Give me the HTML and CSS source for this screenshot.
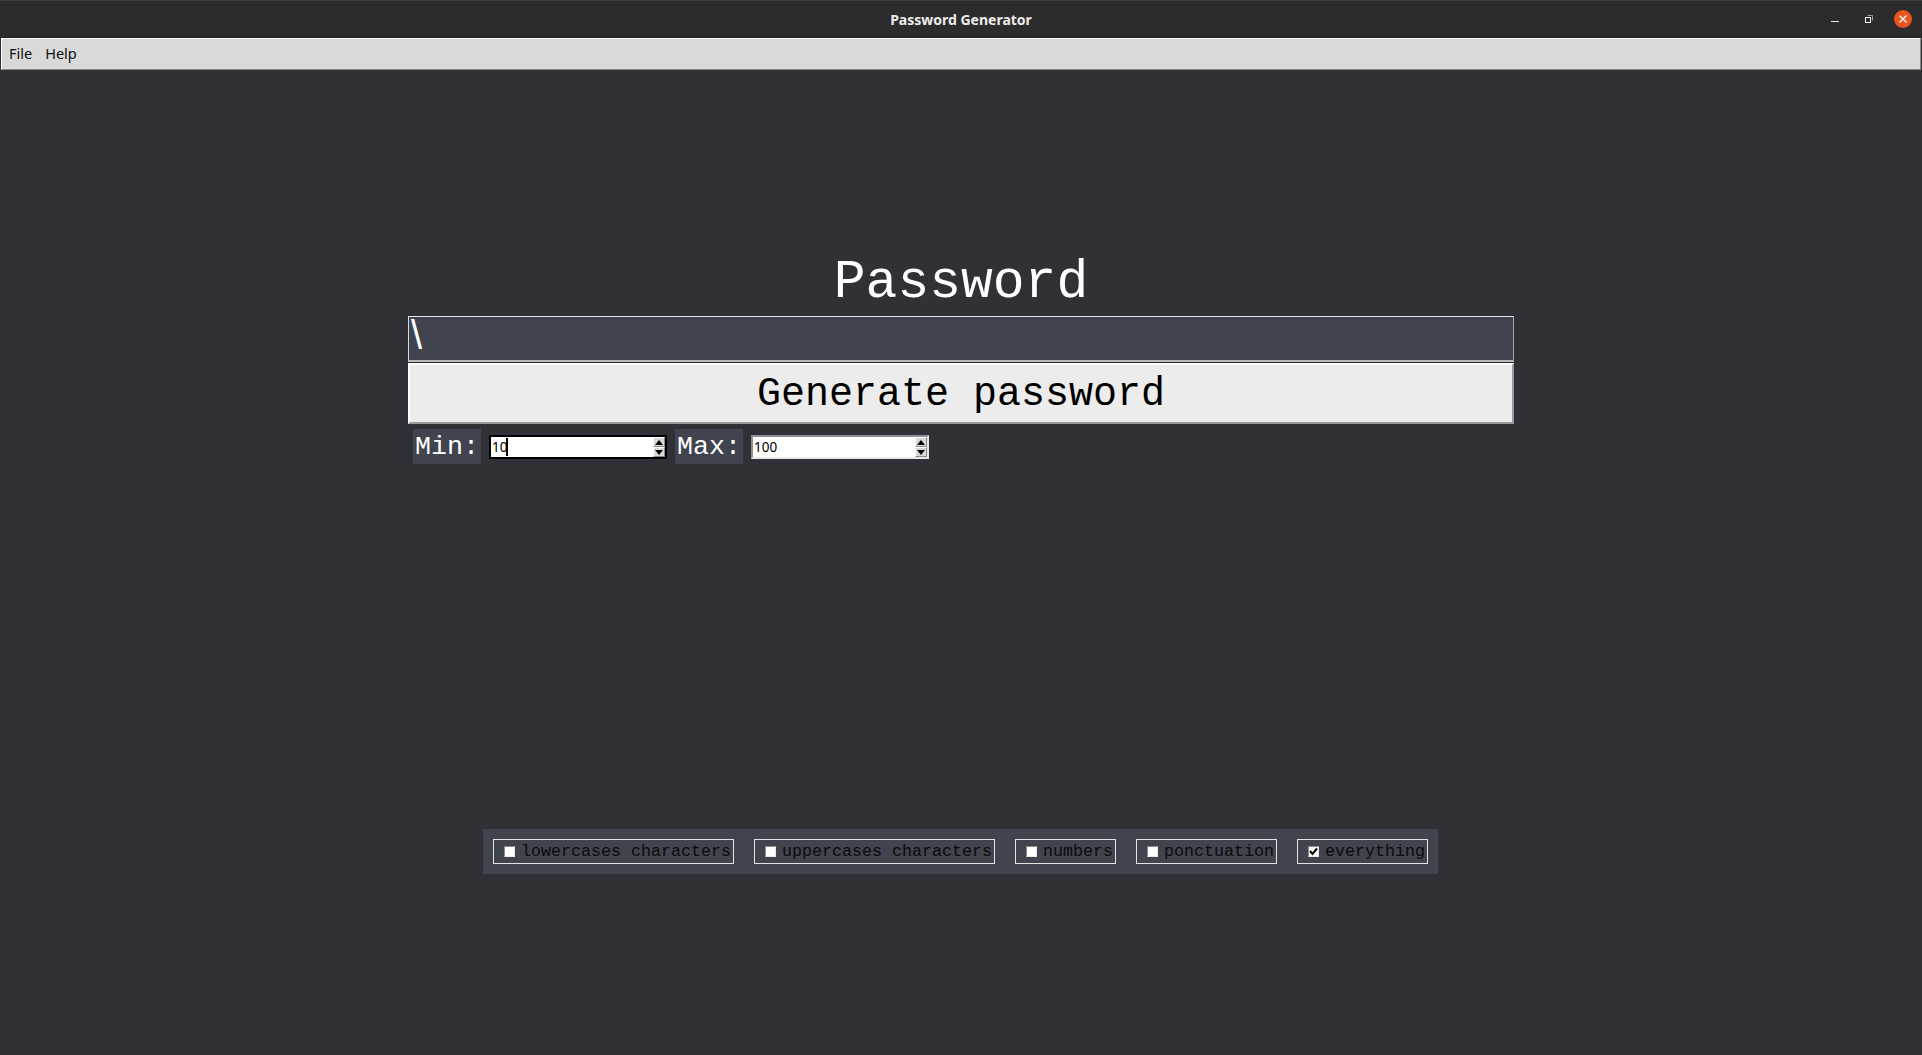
FILE: index.html
```html
<!DOCTYPE html>
<html lang="en">
<head>
<meta charset="utf-8">
<title>Password Generator</title>
<link rel="stylesheet" href="styles.css">
</head>
<body>
<header class="titlebar">
  <span class="title">Password Generator</span>
  <div class="winbtns">
    <svg class="wb" width="12" height="12" viewBox="0 0 12 12"><path d="M2 8.5h8" stroke="#e8e8e8" stroke-width="1"/></svg>
    <svg class="wb" width="12" height="12" viewBox="0 0 12 12"><path d="M4.5 2.5h5v5" fill="none" stroke="#9a9a9a" stroke-width="1"/><rect x="2.5" y="4.5" width="5" height="5" fill="none" stroke="#f2f2f2" stroke-width="1"/></svg>
    <svg class="close" width="18" height="18" viewBox="0 0 18 18"><circle cx="9" cy="9" r="9" fill="#e95420"/><path d="M5.5 5.5l7 7M12.5 5.5l-7 7" stroke="#fff" stroke-width="1.4"/></svg>
  </div>
</header>
<nav class="menubar"><span class="menu">File</span><span class="menu">Help</span></nav>
<main class="main">
  <h1 class="heading">Password</h1>
  <div class="output">\</div>
  <button class="generate">Generate password</button>
  <div class="range">
    <span class="rlabel">Min:</span>
    <div class="spin spin-focus"><span class="val">10</span><span class="caret"></span><span class="arrows"><i class="up"></i><i class="down"></i></span></div>
    <span class="rlabel">Max:</span>
    <div class="spin"><span class="val">100</span><span class="arrows"><i class="up"></i><i class="down"></i></span></div>
  </div>
  <div class="options">
    <label class="opt o1"><span class="box"></span><span class="otext">lowercases characters</span></label>
    <label class="opt o2"><span class="box"></span><span class="otext">uppercases characters</span></label>
    <label class="opt o3"><span class="box"></span><span class="otext">numbers</span></label>
    <label class="opt o4"><span class="box"></span><span class="otext">ponctuation</span></label>
    <label class="opt o5"><span class="box"><svg width="9" height="9" viewBox="0 0 9 9"><path d="M1 4l2.5 3L8 1.5" fill="none" stroke="#000" stroke-width="2"/></svg></span><span class="otext">everything</span></label>
  </div>
</main>
</body>
</html>
```
FILE: styles.css
```css
* { box-sizing: border-box; }
html, body { margin: 0; height: 100%; }
body {
  width: 1922px; height: 1055px; overflow: hidden;
  background: #2f3136;
  display: flex; flex-direction: column;
  font-family: "Liberation Mono", monospace;
}
.titlebar {
  height: 38px; flex: none; position: relative;
  background: #2c2c2c;
  border-top: 1px solid #3d3d3d;
  border-bottom: 1px solid #232323;
  display: flex; align-items: center; justify-content: center;
}
.title { font: bold 14px "Noto Sans", sans-serif; color: #ececec; }
.winbtns { position: absolute; right: 10px; top: 9px; display: flex; align-items: center; }
.wb { margin-right: 22px; }
.wb + .wb { margin-right: 19px; }
.menubar {
  height: 32px; flex: none; margin: 0 1px 0 1px;
  background: #d9d9d9;
  border-top: 1px solid #fff; border-left: 1px solid #fff;
  border-bottom: 1px solid #858585; border-right: 1px solid #858585;
  display: flex; align-items: center; padding: 0 0 2px 7px; gap: 13px;
  font: 14.5px "Noto Sans", "Open Sans", sans-serif; color: #111;
}
.main {
  flex: 1; display: flex; flex-direction: column;
  padding: 182px 408px 0 408px;
}
.heading {
  margin: 0; height: 64px; text-align: center;
  font: 400 53px/62px "Liberation Mono", monospace; color: #fff;
}
.output {
  height: 46px; padding-left: 2px;
  background: #3f444e;
  border: 1px solid #d9d9d9; border-bottom: 2px solid #b8b8b8;
  border-right-color: #a6a6a6;
  border-top-color: #e6e6e6;
  font-family: "Liberation Sans", sans-serif;
  font-size: 40px; line-height: 37px; color: #fff;
  white-space: pre;
}
.generate {
  display: block; width: 100%; height: 61px; padding: 2px 0 0; margin: 1px 0 0;
  background: #ececec; color: #000;
  border: 2px solid; border-color: #fff #9a9a9a #9a9a9a #fff;
  font: 40px/50px "Liberation Mono", monospace;
}
.range { display: flex; align-items: center; margin-top: 5px; padding-left: 5px; }
.rlabel {
  width: 68px; height: 35px; flex: none;
  background: #3f444e; color: #fff;
  font-size: 26.67px; line-height: 36px; text-align: center;
}
.spin {
  width: 178px; height: 24px; flex: none; margin: 1px 8px 0;
  position: relative; display: flex; align-items: center;
  background: #fff; border: 2px solid; border-color: #8f8f8f #e8e8e8 #e8e8e8 #8f8f8f;
  padding-left: 1px;
  font: 13.5px "Noto Sans", "Open Sans", sans-serif; color: #000;
}
.spin-focus { border: 2px solid #000; }
.caret { width: 2px; height: 18px; background: #000; margin-left: -1px; }
.arrows {
  position: absolute; right: 0; top: 0; bottom: 0; width: 12px;
  display: flex; flex-direction: column; background: #d9d9d9;
}
.arrows i { flex: 1; display: block; position: relative; border: 1px solid; border-color: #fff #8a8a8a #8a8a8a #fff; }
.arrows i::after {
  content: ""; position: absolute; left: 1px; top: 2px;
  border-left: 4px solid transparent; border-right: 4px solid transparent;
}
.up::after { border-bottom: 5px solid #000; }
.down::after { border-top: 5px solid #000; }
.options {
  margin: 365px 0 0 75px; width: 955px; height: 45px; flex: none;
  background: #3f444e; padding: 10px;
  display: flex; justify-content: space-between;
}
.opt {
  height: 25px; border: 1px solid #e2e2e2; display: flex; align-items: center;
  font-size: 16.67px; color: #0b0b0b;
  padding-left: 10px;
}
.o1, .o2 { width: 241px; }
.o3 { width: 101px; }
.o4 { width: 141px; }
.o5 { width: 131px; }
.box {
  width: 11px; height: 11px; flex: none; background: #fff;
  border: 1px solid; border-color: #8a8a8a #e8e8e8 #e8e8e8 #8a8a8a;
  display: flex; align-items: center; justify-content: center;
}
.box svg { display: block; }
.otext { margin-left: 6px; white-space: nowrap; }
```
